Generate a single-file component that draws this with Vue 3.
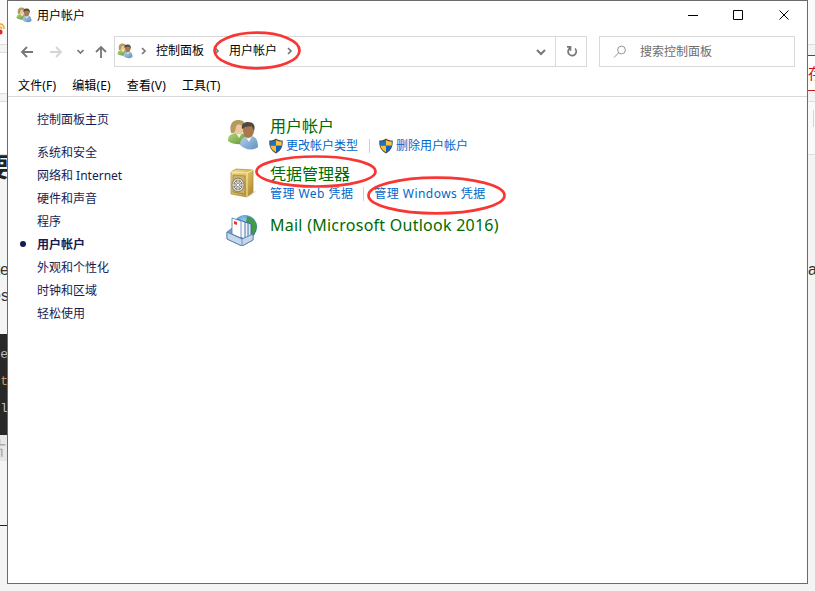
<script setup>
const menus = ["文件(F)", "编辑(E)", "查看(V)", "工具(T)"];

const categories = [
  { label: "系统和安全" },
  { label: "网络和 Internet" },
  { label: "硬件和声音" },
  { label: "程序" },
  { label: "用户帐户", active: true },
  { label: "外观和个性化" },
  { label: "时钟和区域" },
  { label: "轻松使用" },
];

const items = [
  {
    icon: "users",
    title: "用户帐户",
    links: [
      { label: "更改帐户类型", shield: true },
      { label: "删除用户帐户", shield: true },
    ],
  },
  {
    icon: "safe",
    title: "凭据管理器",
    links: [{ label: "管理 Web 凭据" }, { label: "管理 Windows 凭据" }],
  },
  { icon: "mail", title: "Mail (Microsoft Outlook 2016)", links: [] },
];
</script>

<template>
  <div class="desktop">
    <svg width="0" height="0" class="defs">
      <defs>
        <linearGradient id="gold" x1="0" y1="0" x2="1" y2="1">
          <stop offset="0" stop-color="#f3dd8e" />
          <stop offset="0.5" stop-color="#d9b95c" />
          <stop offset="1" stop-color="#a98328" />
        </linearGradient>
        <radialGradient id="globe" cx="0.45" cy="0.3" r="0.8">
          <stop offset="0" stop-color="#a9d8f5" />
          <stop offset="0.6" stop-color="#3186c9" />
          <stop offset="1" stop-color="#173d8c" />
        </radialGradient>
        <linearGradient id="green" x1="0" y1="0" x2="1" y2="1">
          <stop offset="0" stop-color="#b5d67c" />
          <stop offset="1" stop-color="#609339" />
        </linearGradient>
        <linearGradient id="blue" x1="0" y1="0" x2="1" y2="1">
          <stop offset="0" stop-color="#b9d2ea" />
          <stop offset="1" stop-color="#5e90c2" />
        </linearGradient>
        <symbol id="users" viewBox="0 0 32 32">
          <path d="M1 22c0-5 2-7 7-8h6c4 1 6 3 6 10-6 2-14 2-19-2z" fill="url(#green)" />
          <path d="M9 14l3 5 3-5z" fill="#f1f4df" />
          <path d="M6 8c0-4 3-6 6-6s5 3 5 6c0 5-2 7-5 7s-6-2-6-7z" fill="#ecc69d" />
          <path d="M4 14C2 6 5 1 11 1c5 0 7 2 7 6-4 0-6-3-8-1-2 2-1 6-3 8z" fill="#b6995f" />
          <path d="M13 26c0-5 3-8 7-9h5c4 1 6 5 6 11-5 4-13 3-18-2z" fill="url(#blue)" />
          <path d="M18 17l4 6 3-6z" fill="#f4f8fc" />
          <path d="M16 11c0-5 2-7 5-7s6 2 6 7-3 8-6 8-5-3-5-8z" fill="#a8784f" />
          <path d="M15 10c-1-5 2-7 6-7 5 0 8 3 6 9-1-2-1-4-3-5-3 1-6 0-7 2z" fill="#51483f" />
        </symbol>
        <symbol id="safe" viewBox="0 0 32 32">
          <path d="M24 25l6-1-8 6z" fill="#dedede" />
          <path d="M4 5l5-3 17 1v22l-6 5-16-3z" fill="url(#gold)" stroke="#a88739" stroke-width=".7" />
          <path d="M4 5l16 1 6-3M20 6v24" fill="none" stroke="#fff0ae" stroke-width=".9" />
          <path d="M6 8l12 1v18L6 25z" fill="#cbb066" stroke="#927735" stroke-width=".6" />
          <ellipse cx="11" cy="18" rx="6" ry="6.800" fill="#d7d5c7" stroke="#85806f" />
          <ellipse cx="11" cy="18" rx="4" ry="4.700" fill="#aaa797" stroke="#777364" />
          <path d="M7 14l8 8m0-8l-8 8m4-10v12M5.500 18h11" stroke="#e8e7de" stroke-width="1" />
          <circle cx="11" cy="18" r="1.600" fill="#fff" stroke="#686457" stroke-width=".6" />
        </symbol>
        <symbol id="mail" viewBox="0 0 32 32">
          <circle cx="19" cy="13" r="12" fill="url(#globe)" />
          <path d="M21 2c5 1 9 5 10 11l-3 7-4-3 1-5-5-3zM24 19l5-1-4 6z" fill="#459b45" />
          <path d="M1 18l5-4 21 7v5L16 32 1 25z" fill="#7d9fc6" stroke="#4f75a6" stroke-width=".7" />
          <path d="M20 8l5 2v15l-5-2z" fill="#dceafa" stroke="#38639c" stroke-width=".9" />
          <path d="M16 7l6 2v16l-6-2z" fill="#edf4fc" stroke="#38639c" stroke-width=".9" />
          <path d="M11 5l8 3v17l-8-3z" fill="#f5f9fe" stroke="#38639c" stroke-width=".9" />
          <path d="M6 4l9 3v17l-9-4z" fill="#fff" stroke="#557dac" stroke-width=".8" />
          <path d="M8 7l3 1v3l-3-1z" fill="#ee3825" />
          <path d="M1 18l15 7 11-5v6L16 32 1 25z" fill="#c4d7ed" stroke="#4f75a6" stroke-width=".8" />
          <path d="M16 25v7" stroke="#6087b7" stroke-width=".8" />
        </symbol>
        <symbol id="shield" viewBox="0 0 16 16">
          <path d="M8 .5c2 1.500 4 2 6.700 2C15 8 13.500 12.500 8 15.500 2.500 12.500 1 8 1.300 2.500 4 2.500 6 2 8 .5z" fill="#4b4b4b" />
          <path d="M8 2v5.700H2.300V3.500C4.700 3.500 6.200 3 8 2z" fill="#1874cf" />
          <path d="M8 2c1.800 1 3.300 1.500 5.700 1.500v4.200H8z" fill="#fdc53c" />
          <path d="M2.400 7.700H8v6.500c-3.500-2-5-4-5.600-6.500z" fill="#fdbd2c" />
          <path d="M8 7.700h5.600C13 10.200 11.500 12.200 8 14.200z" fill="#0b65bc" />
        </symbol>
      </defs>
    </svg>

    <div class="behind left">
      <div class="strip tab">
        <svg class="feed" width="7" height="12" viewBox="0 0 7 12">
          <path d="M0 1c2.500 0 4 2 4 5M0 4c1 0 1.500 1 1.500 2" fill="none" stroke="#f5a52b" stroke-width="1.500" />
          <circle cx="0" cy="9" r="2.500" fill="#e32525" />
        </svg>
      </div>
      <div class="strip gap-a"></div>
      <div class="strip field"></div>
      <div class="strip gap-b"></div>
      <div class="strip toolbar"></div>
      <div class="strip heading"><span>要</span></div>
      <div class="strip prose"><span>te</span><span>es</span></div>
      <div class="strip code"><span>re</span><span class="warm">t</span><span>l</span></div>
      <div class="strip caption"><span>片</span></div>
      <div class="strip rule"></div>
    </div>

    <main class="window">
      <header class="titlebar">
        <svg class="user-small"><use href="#users" /></svg>
        <span class="title">用户帐户</span>
        <svg class="controls" width="104" height="12" viewBox="0 0 104 12" fill="none" stroke="#000">
          <path d="M0 6.500h10M45.500 1.500h9v9h-9zM91.500 1.500l9 9m0-9l-9 9" />
        </svg>
      </header>

      <nav class="navigation">
        <svg class="arrows" width="88" height="16" viewBox="0 0 88 16" fill="none" stroke-width="1.800">
          <path d="M13 8H2m5-5L2 8l5 5" stroke="#777" />
          <path d="M30 8h11m-5-5l5 5-5 5" stroke="#d5d5d5" />
          <path d="M57.500 6l3 3 3-3" stroke="#777" stroke-width="1.700" />
          <path d="M81 14V3m-5 5l5-5 5 5" stroke="#777" />
        </svg>
        <div class="address">
          <svg class="user-small"><use href="#users" /></svg>
          <svg class="chevron first" viewBox="0 0 6 8"><path d="M1 1l3 3-3 3" /></svg>
          <span>控制面板</span>
          <svg class="chevron second" viewBox="0 0 6 8"><path d="M1 1l3 3-3 3" /></svg>
          <span>用户帐户</span>
          <svg class="chevron third" viewBox="0 0 6 8"><path d="M1 1l3 3-3 3" /></svg>
          <svg class="dropdown" width="10" height="8" viewBox="0 0 10 8">
            <path d="M1 2l4 4 4-4" fill="none" stroke="#777" stroke-width="2" />
          </svg>
          <div class="refresh">
            <svg width="12" height="13" viewBox="0 0 12 13" fill="none" stroke="#777" stroke-width="1.700">
              <path d="M9 3.500A4.100 4.100 0 1 1 4 3M1 1.800h3.500v4" />
            </svg>
          </div>
        </div>
        <div class="search">
          <svg width="14" height="14" viewBox="0 0 14 14" fill="none" stroke="#979197" stroke-width="1">
            <circle cx="8.500" cy="5" r="3.900" />
            <path d="M5.700 7.800L1 12.500" />
          </svg>
          <span>搜索控制面板</span>
        </div>
      </nav>

      <div class="menubar">
        <span v-for="menu in menus" :key="menu">{{ menu }}</span>
      </div>

      <div class="content">
        <aside>
          <div class="home">控制面板主页</div>
          <ul>
            <li v-for="category in categories" :key="category.label" :class="{ active: category.active }">
              {{ category.label }}
            </li>
          </ul>
        </aside>
        <section class="items">
          <article v-for="item in items" :key="item.icon" :class="item.icon">
            <svg class="item-icon"><use :href="'#' + item.icon" /></svg>
            <div>
              <h2>{{ item.title }}</h2>
              <div v-if="item.links.length" class="links">
                <a v-for="link in item.links" :key="link.label">
                  <svg v-if="link.shield" class="shield"><use href="#shield" /></svg>{{ link.label }}
                </a>
              </div>
            </div>
          </article>
        </section>
      </div>
    </main>

    <div class="behind right">
      <div class="strip r-top"></div>
      <div class="strip r-gap"></div>
      <div class="strip r-button"><span>存</span></div>
      <div class="strip r-space"></div>
      <div class="strip r-tools"><i></i></div>
      <div class="strip r-page"><span>a</span></div>
    </div>

    <svg class="marks" width="815" height="591" viewBox="0 0 815 591">
      <ellipse cx="257" cy="50.500" rx="42.500" ry="17.800" />
      <ellipse cx="316" cy="171.500" rx="59.500" ry="15" />
      <ellipse cx="436.500" cy="195.500" rx="68" ry="17.800" />
    </svg>
  </div>
</template>

<style>
body {
  overflow: hidden;
}
</style>

<style scoped>
* {
  box-sizing: border-box;
}

.desktop {
  position: relative;
  display: grid;
  grid-template-columns: 7px 801px 7px;
  width: 815px;
  height: 591px;
  overflow: hidden;
  background: #f4f4f4;
  color: #000;
  font: 12px/16px "Noto Sans", "Noto Sans CJK SC", sans-serif;
}

.defs {
  position: absolute;
}

svg {
  flex: none;
}

.window {
  height: 584px;
  background: #fff;
  border: 1px solid #6b6b6b;
}

.titlebar {
  display: flex;
  align-items: center;
  height: 29px;
  padding: 0 15px 0 8px;
}

.user-small {
  width: 16px;
  height: 16px;
}

.titlebar .user-small {
  margin-top: -1px;
}

.address .user-small {
  margin-top: -2px;
}

.title {
  margin-left: 5px;
}

.controls {
  margin-left: auto;
  margin-top: -1px;
}

.navigation {
  display: flex;
  align-items: center;
  height: 43px;
  padding: 0 12px;
}

.arrows {
  margin-right: 6px;
}

.address {
  display: flex;
  align-items: center;
  width: 473px;
  height: 31px;
  padding-left: 2px;
  border: 1px solid #d9d9d9;
}

.address span {
  margin-top: -2px;
}

.chevron {
  width: 6px;
  height: 8px;
  margin-top: -1px;
  fill: none;
  stroke: #777;
  stroke-width: 1.7;
}

.first {
  margin-right: 9px;
  margin-left: 8px;
}

.second {
  margin-right: 9px;
  margin-left: 10px;
}

.third {
  margin-left: 10px;
}

.dropdown {
  margin-left: auto;
  margin-right: 9px;
}

.refresh {
  display: grid;
  place-items: center;
  width: 31px;
  height: 29px;
  padding-left: 2px;
  border-left: 1px solid #d9d9d9;
}

.search {
  display: flex;
  align-items: center;
  gap: 13px;
  width: 196px;
  height: 31px;
  margin-left: 12px;
  padding-left: 13px;
  border: 1px solid #d9d9d9;
  color: #6d6d6d;
}

.menubar {
  display: flex;
  gap: 16px;
  height: 24px;
  padding: 5px 10px 3px;
  border-bottom: 1px solid #d9d9d9;
  letter-spacing: 0.15px;
}

.content {
  display: grid;
  grid-template-columns: 219px 1fr;
}

aside {
  padding: 15px 0 0 29px;
  color: #151c55;
}

.home {
  margin-bottom: 13px;
}

ul {
  margin: 0;
  padding: 0;
  list-style: none;
}

li {
  display: flex;
  align-items: center;
  height: 23px;
}

.active {
  font-weight: 700;
}

.active::before {
  width: 6px;
  height: 6px;
  margin: -2px 11px 0 -17px;
  border-radius: 50%;
  background: #151c55;
  content: "";
}

.items {
  padding-top: 19px;
}

article {
  display: flex;
  gap: 11px;
  height: 48px;
}

.item-icon {
  width: 32px;
  height: 32px;
  margin-top: 3px;
}

.mail .item-icon {
  margin-top: 2px;
  margin-right: 1px;
  margin-left: -1px;
}

h2 {
  margin: 0;
  color: #006b00;
  font-size: 16px;
  font-weight: 400;
  line-height: 20px;
}

.mail h2 {
  padding-top: 3px;
  letter-spacing: 0.25px;
}

.links {
  display: flex;
  padding-top: 1px;
  color: #0066cc;
  line-height: 18px;
}

.safe .links {
  letter-spacing: 0.45px;
}

.links a {
  display: flex;
  align-items: center;
}

.links a + a {
  margin-left: 11px;
}

.links a + a::before {
  width: 1px;
  height: 14px;
  margin-right: 10px;
  background: #d0d0d0;
  content: "";
}

.safe a + a {
  margin-left: 10px;
}

.shield {
  width: 16px;
  height: 16px;
  margin-left: -2px;
  margin-right: 2px;
}

.marks {
  position: absolute;
  inset: 0;
  fill: none;
  stroke: #f83735;
  stroke-width: 2.7;
}

.behind {
  overflow: hidden;
}

.strip {
  display: flex;
  justify-content: flex-end;
  overflow: hidden;
  white-space: nowrap;
}

.tab {
  height: 45px;
  padding-top: 23px;
  background: #fafafa;
  border-bottom: 1px solid #ddd;
}

.gap-a {
  height: 7px;
}

.field {
  height: 42px;
  background: #fff;
  border: solid #ddd;
  border-width: 1px 0;
}

.gap-b {
  height: 8px;
  border-bottom: 1px solid #ddd;
}

.toolbar {
  height: 53px;
  background: #fff;
  border-bottom: 1px solid #ddd;
}

.heading {
  height: 98px;
  color: #222;
  font-size: 26px;
  font-weight: 700;
  line-height: 24px;
}

.heading span {
  margin-right: -2px;
}

.prose {
  flex-direction: column;
  align-items: flex-end;
  justify-content: flex-start;
  height: 81px;
  padding-top: 4px;
  color: #333;
  font: 16px/26px "Liberation Sans", sans-serif;
}

.prose span {
  margin-right: -2px;
}

.code {
  flex-direction: column;
  align-items: flex-end;
  justify-content: flex-start;
  height: 101px;
  padding-top: 7px;
  background: #282828;
  color: #b5bec8;
  font: 13px/27px "Liberation Mono", monospace;
}

.code span {
  margin-right: -1px;
}

.warm {
  color: #ce965e;
}

.caption {
  height: 26px;
  background: #e7e7e7;
  color: #aaa;
  font-size: 18px;
  line-height: 26px;
}

.rule {
  height: 65px;
  border-bottom: 1px solid #222;
}

.right .strip {
  justify-content: flex-start;
}

.r-top {
  height: 45px;
  background: #fafafa;
  border-bottom: 1px solid #ddd;
}

.r-gap {
  height: 10px;
}

.r-button {
  height: 36px;
  background: #fff;
  border: solid #c9151e;
  border-width: 1px 0;
  color: #c9151e;
  font-size: 15px;
  line-height: 34px;
}

.r-space {
  height: 11px;
  border-bottom: 1px solid #ddd;
}

.r-tools {
  height: 53px;
  padding: 8px 0 0 5px;
  background: #fafafa;
  border-bottom: 1px solid #ddd;
}

.r-tools i {
  width: 1px;
  height: 17px;
  background: #d5d5d5;
}

.r-page {
  height: 436px;
  padding-top: 102px;
  color: #333;
  font: 16px/26px "Liberation Sans", sans-serif;
}
</style>
